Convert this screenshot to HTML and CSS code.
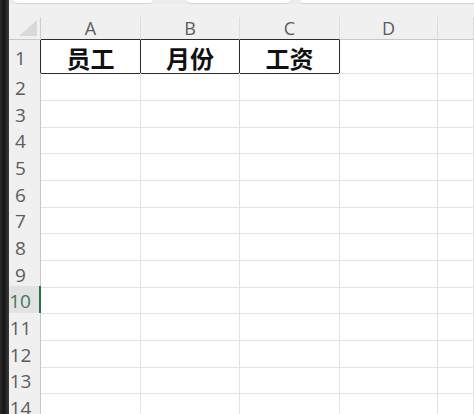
FILE: index.html
```html
<!DOCTYPE html>
<html>
<head>
<meta charset="utf-8">
<title>Sheet1</title>
<link rel="stylesheet" href="styles.css">
</head>
<body>
<div class="screen">
  <div class="edge"></div>
  <div class="sheet">
    <div class="tabs">
      <span class="tab tab-1"></span>
      <span class="tab tab-2"></span>
      <span class="tab tab-3"></span>
    </div>

    <div class="grid col-head">
      <div class="corner"><span class="corner-tri"></span></div>
      <div class="ch ch-on">A</div>
      <div class="ch ch-on">B</div>
      <div class="ch ch-on">C</div>
      <div class="ch">D</div>
      <div class="ch"></div>
    </div>

    <div class="grid row row-1">
      <div class="rh rh-on">1</div>
      <div class="cell title">员工</div>
      <div class="cell title">月份</div>
      <div class="cell title">工资</div>
      <div class="cell"></div>
      <div class="cell"></div>
    </div>
    <div class="grid row"><div class="rh">2</div><div class="cell"></div><div class="cell"></div><div class="cell"></div><div class="cell"></div><div class="cell"></div></div>
    <div class="grid row"><div class="rh">3</div><div class="cell"></div><div class="cell"></div><div class="cell"></div><div class="cell"></div><div class="cell"></div></div>
    <div class="grid row"><div class="rh">4</div><div class="cell"></div><div class="cell"></div><div class="cell"></div><div class="cell"></div><div class="cell"></div></div>
    <div class="grid row"><div class="rh">5</div><div class="cell"></div><div class="cell"></div><div class="cell"></div><div class="cell"></div><div class="cell"></div></div>
    <div class="grid row"><div class="rh">6</div><div class="cell"></div><div class="cell"></div><div class="cell"></div><div class="cell"></div><div class="cell"></div></div>
    <div class="grid row"><div class="rh">7</div><div class="cell"></div><div class="cell"></div><div class="cell"></div><div class="cell"></div><div class="cell"></div></div>
    <div class="grid row"><div class="rh">8</div><div class="cell"></div><div class="cell"></div><div class="cell"></div><div class="cell"></div><div class="cell"></div></div>
    <div class="grid row"><div class="rh">9</div><div class="cell"></div><div class="cell"></div><div class="cell"></div><div class="cell"></div><div class="cell"></div></div>
    <div class="grid row row-active"><div class="rh">10</div><div class="cell"></div><div class="cell"></div><div class="cell"></div><div class="cell"></div><div class="cell"></div></div>
    <div class="grid row"><div class="rh">11</div><div class="cell"></div><div class="cell"></div><div class="cell"></div><div class="cell"></div><div class="cell"></div></div>
    <div class="grid row"><div class="rh">12</div><div class="cell"></div><div class="cell"></div><div class="cell"></div><div class="cell"></div><div class="cell"></div></div>
    <div class="grid row"><div class="rh">13</div><div class="cell"></div><div class="cell"></div><div class="cell"></div><div class="cell"></div><div class="cell"></div></div>
    <div class="grid row"><div class="rh">14</div><div class="cell"></div><div class="cell"></div><div class="cell"></div><div class="cell"></div><div class="cell"></div></div>
  </div>
</div>
</body>
</html>
```

FILE: styles.css
```css
html, body {
	margin: 0;
	padding: 0;
	width: 100%;
	height: 100%;
	overflow: hidden;
	background: #fff;
}

.screen {
	display: flex;
	height: 100%;
	font-family: "Open Sans", "Liberation Sans", sans-serif;
}

.edge {
	flex: 0 0 9px;
	background: linear-gradient(to right, #2b2b2b, #151515 45%, #3c3c3c);
}

.sheet {
	flex: 1;
	min-width: 0;
	display: flex;
	flex-direction: column;
}

/* bottoms of the toolbar tabs */
.tabs {
	display: flex;
	height: 4px;
	background: #ececec;
	flex: 0 0 auto;
}

.tab {
	display: block;
	height: 3px;
	background: #fff;
	border-bottom: 1px solid #d4d4d4;
	border-radius: 0 0 5px 5px;
}

.tab-1 { margin-left: 5px; width: 139px; }
.tab-2 { margin-left: 34px; width: 103px; }
.tab-3 { margin-left: 10px; flex: 1; border-radius: 0 0 0 5px; }

.grid {
	display: grid;
	grid-template-columns: 32px 100px 99px 100px 98px 1fr;
	flex: 0 0 auto;
}

.col-head {
	background: #f0f0f0;
	padding-top: 13px;
}

.corner {
	position: relative;
	height: 23px;
	border-right: 1px solid #cfcfcf;
	border-bottom: 1px solid #c8c8c8;
	box-sizing: border-box;
}

.corner-tri {
	position: absolute;
	right: 3px;
	bottom: 3px;
	width: 0;
	height: 0;
	border-left: 18px solid transparent;
	border-bottom: 16px solid #d9d9d9;
}

.ch {
	height: 23px;
	box-sizing: border-box;
	border-right: 1px solid #dcdcdc;
	border-bottom: 1px solid #c8c8c8;
	text-align: center;
	font-size: 18px;
	line-height: 23px;
	color: #5c5c5c;
}

.ch-on {
	border-bottom-color: #2a2a2a;
}

.row {
	height: 26.67px;
}

.row-1 {
	height: 33px;
}

.rh {
	box-sizing: border-box;
	background: #f0f0f0;
	border-right: 1px solid #c8c8c8;
	border-bottom: 1px solid #dedede;
	padding-right: 8px;
	padding-top: 3px;
	text-align: center;
	font-size: 19px;
	line-height: 24px;
	color: #5c5c5c;
	white-space: nowrap;
}

.rh-on {
	border-right-color: #2a2a2a;
	line-height: 30px;
}

.cell {
	box-sizing: border-box;
	border-right: 1px solid #e2e2e2;
	border-bottom: 1px solid #e2e2e2;
}

.title {
	border-right-color: #2a2a2a;
	border-bottom-color: #2a2a2a;
	display: flex;
	align-items: center;
	justify-content: center;
	padding-top: 3px;
	font-family: "Noto Sans CJK SC", "Liberation Sans", sans-serif;
	font-weight: bold;
	font-size: 24px;
	line-height: 1;
	color: #111;
}

.row-active .rh {
	background: #e2e2e2;
	color: #3f7a58;
	border-right: 2px solid #1f7a47;
}
```
